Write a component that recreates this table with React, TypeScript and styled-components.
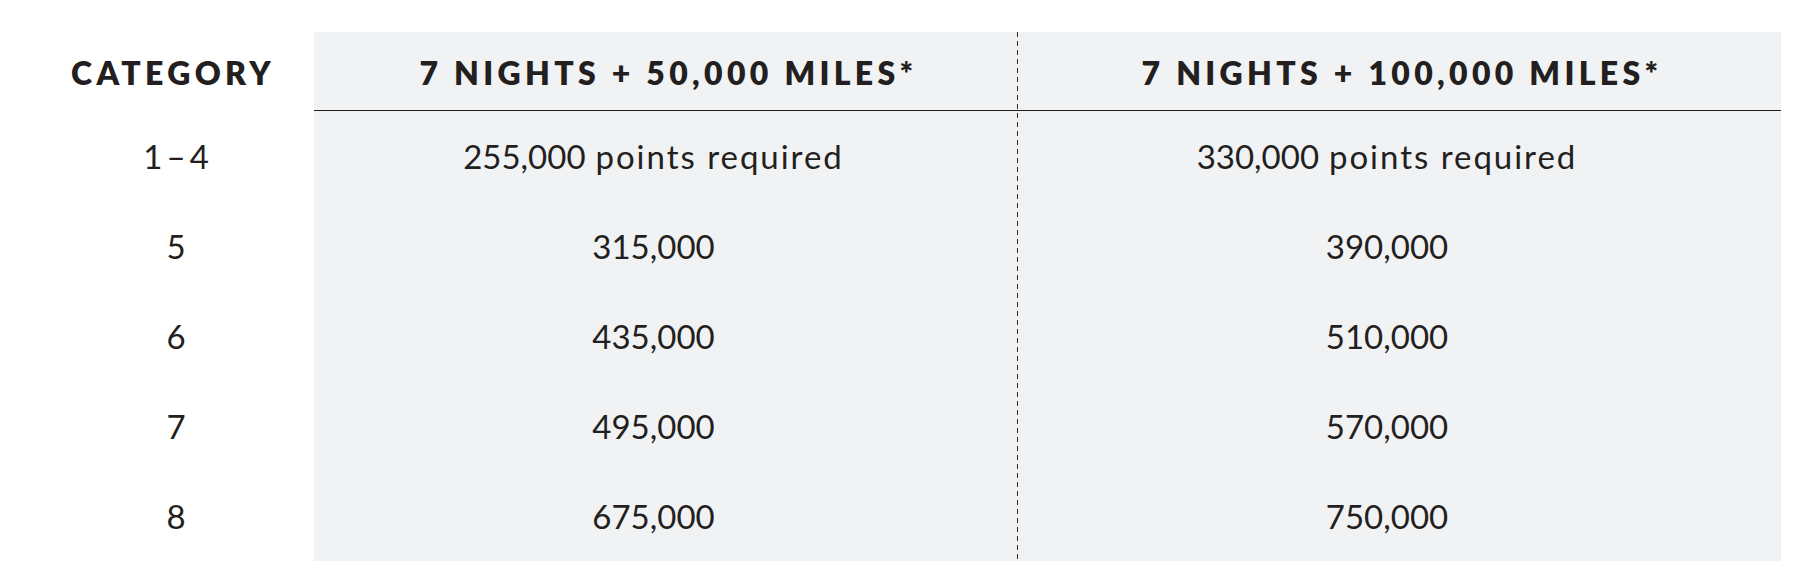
import styled, { createGlobalStyle } from 'styled-components'

interface Row {
  category: string
  fiftyK: string
  hundredK: string
  suffix?: string
}

const rows: Row[] = [
  { category: '1\u2009–\u20094', fiftyK: '255,000', hundredK: '330,000', suffix: 'points required' },
  { category: '5', fiftyK: '315,000', hundredK: '390,000' },
  { category: '6', fiftyK: '435,000', hundredK: '510,000' },
  { category: '7', fiftyK: '495,000', hundredK: '570,000' },
  { category: '8', fiftyK: '675,000', hundredK: '750,000' },
]

const GlobalStyle = createGlobalStyle`
  html, body {
    margin: 0;
    background: #ffffff;
  }
  body {
    font-family: Lato, "Liberation Sans", sans-serif;
    color: #231f20;
  }
`

const Page = styled.div`
  width: 1810px;
  height: 585px;
  padding: 32px 0 0 32px;
  box-sizing: border-box;
`

const Table = styled.div`
  display: flex;
  align-items: stretch;
`

const Column = styled.div<{ $width: number; $shaded?: boolean; $divider?: boolean }>`
  width: ${(p) => p.$width}px;
  display: flex;
  flex-direction: column;
  background-color: ${(p) => (p.$shaded ? '#f1f2f4' : 'transparent')};
  background-image: ${(p) =>
    p.$divider ? 'linear-gradient(to bottom, #2b2728 0 5px, transparent 5px 9px)' : 'none'};
  background-size: 1px 9px;
  background-repeat: repeat-y;
  background-position: 0 0;
`

const HeadCell = styled.div<{ $rule?: boolean }>`
  height: 77.5px;
  box-sizing: border-box;
  display: flex;
  align-items: center;
  justify-content: center;
  padding-top: 3px;
  padding-left: ${(p) => (p.$rule ? 6 : 0)}px;
  font-size: 32px;
  font-weight: 800;
  letter-spacing: 0.135em;
  text-transform: uppercase;
  border-bottom: 1.5px solid ${(p) => (p.$rule ? '#231f20' : 'transparent')};
  white-space: nowrap;
  box-sizing: content-box;
  height: 74.5px;
`

const BodyCell = styled.div<{ $shiftLeft?: number; $shiftRight?: number }>`
  height: 90px;
  display: flex;
  align-items: center;
  justify-content: center;
  padding-right: ${(p) => p.$shiftLeft ?? 0}px;
  padding-left: ${(p) => p.$shiftRight ?? 0}px;
  font-size: 33px;
  font-weight: 400;
  white-space: nowrap;
`

const Suffix = styled.span`
  margin-left: 0.3em;
  letter-spacing: 0.06em;
`

export default function App() {
  return (
    <>
      <GlobalStyle />
      <Page>
        <Table>
          <Column $width={282}>
            <HeadCell>Category</HeadCell>
            {rows.map((r) => (
              <BodyCell key={r.category} $shiftRight={6}>
                {r.category}
              </BodyCell>
            ))}
          </Column>
          <Column $width={703} $shaded>
            <HeadCell $rule>7 Nights + 50,000 Miles*</HeadCell>
            {rows.map((r) => (
              <BodyCell key={r.category} $shiftLeft={24}>
                {r.fiftyK}
                {r.suffix && <Suffix>{r.suffix}</Suffix>}
              </BodyCell>
            ))}
          </Column>
          <Column $width={764} $shaded $divider>
            <HeadCell $rule>7 Nights + 100,000 Miles*</HeadCell>
            {rows.map((r) => (
              <BodyCell key={r.category} $shiftLeft={24}>
                {r.hundredK}
                {r.suffix && <Suffix>{r.suffix}</Suffix>}
              </BodyCell>
            ))}
          </Column>
        </Table>
      </Page>
    </>
  )
}
